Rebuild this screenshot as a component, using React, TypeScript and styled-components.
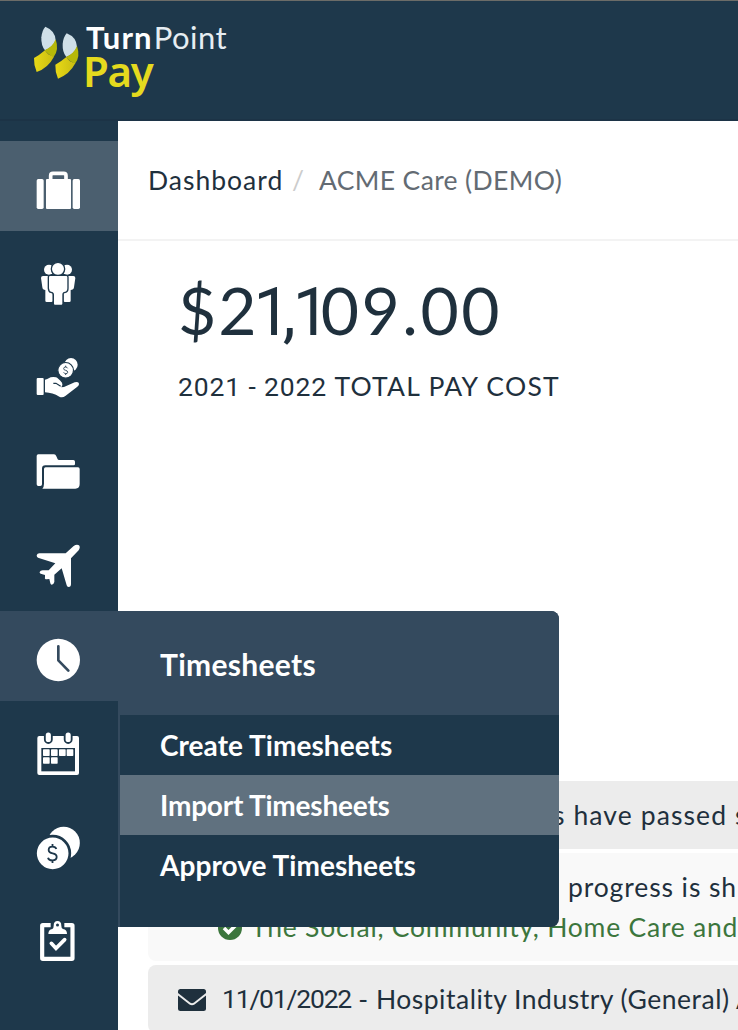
import React from "react";
import styled, { createGlobalStyle } from "styled-components";

const navy = "#1e384b";
const slate = "#344a5e";
const ink = "#1f303d";

const GlobalStyle = createGlobalStyle`
  * { box-sizing: border-box; }
  body { margin: 0; background: #fff; overflow: hidden; font-family: Lato, "Open Sans", sans-serif; color: ${ink}; }
`;

const Page = styled.div`
  display: flex;
  flex-direction: column;
  height: 1030px;
  width: 738px;
  overflow: hidden;
`;

const Header = styled.header`
  display: flex;
  flex: none;
  height: 121px;
  padding: 23px 0 0 33px;
  background: ${navy};
  border-top: 1px solid #6c6c68;
  border-bottom: 2px solid #1c3346;
`;

const LogoMark = styled.svg`
  width: 48px;
  height: 56px;
  flex: none;
`;

const LogoText = styled.div`
  display: flex;
  flex-direction: column;
  margin: -2px 0 0 4px;
  color: #fff;
  white-space: nowrap;
`;

const LogoName = styled.div`
  font-size: 31px;
  line-height: 30px;
  font-weight: 700;
  height: 30px;
  padding-left: 1px;
  letter-spacing: 1.1px;
`;

const LogoLight = styled.span`
  font-weight: 400;
  color: #e6edf2;
  margin-left: 1px;
  letter-spacing: 0.5px;
`;

const LogoPay = styled.div`
  font-family: "Noto Sans", "Open Sans", sans-serif;
  font-size: 42px;
  line-height: 38px;
  font-weight: 600;
  color: #e5da1e;
  margin-left: -2px;
  letter-spacing: -1.3px;
`;

const Body = styled.div`
  display: flex;
  flex: 1;
  min-height: 0;
`;

const Sidebar = styled.nav`
  position: relative;
  display: flex;
  flex-direction: column;
  gap: 4px;
  flex: none;
  width: 118px;
  padding-top: 20px;
  background: ${navy};
`;

const NavItem = styled.a<{ $bg?: string }>`
  display: flex;
  justify-content: center;
  flex: none;
  height: 90px;
  padding-top: 25px;
  padding-right: 2px;
  background: ${(p) => p.$bg ?? "transparent"};
`;

const NavIcon = styled.svg`
  width: 48px;
  height: 48px;
  fill: #fff;
`;

const Flyout = styled.div`
  position: absolute;
  z-index: 2;
  left: 118px;
  top: 490px;
  width: 441px;
  height: 316px;
  border-left: 2px solid ${slate};
  border-radius: 0 8px 8px 0;
  overflow: hidden;
  background: ${navy};
  color: #fff;
  font-weight: 700;
  white-space: nowrap;
`;

const FlyoutTitle = styled.div`
  height: 104px;
  padding: 3px 0 0 40px;
  line-height: 101px;
  font-size: 30px;
  letter-spacing: 0.3px;
  background: ${slate};
`;

const FlyoutItem = styled.a<{ $active?: boolean; $ls?: number }>`
  display: block;
  height: 60px;
  padding-left: 40px;
  line-height: 60px;
  font-size: 28px;
  letter-spacing: ${(p) => p.$ls ?? 0.05}px;
  background: ${(p) => (p.$active ? "#60717f" : "transparent")};
`;

const Main = styled.main`
  display: flex;
  flex-direction: column;
  flex: 1;
  min-width: 0;
  white-space: nowrap;
`;

const Breadcrumb = styled.div`
  display: flex;
  flex: none;
  height: 120px;
  padding-left: 30px;
  line-height: 118px;
  font-size: 26.5px;
  border-bottom: 2px solid #f3f3f3;
`;

const Crumb = styled.span<{ $color: string; $width?: number; $ls?: number }>`
  flex: none;
  width: ${(p) => (p.$width ? `${p.$width}px` : "auto")};
  color: ${(p) => p.$color};
  letter-spacing: ${(p) => p.$ls ?? 0}px;
`;

const Digits = styled.span<{ $ls: number }>`
  font-family: Roboto, sans-serif;
  letter-spacing: ${(p) => p.$ls}px;
  white-space: pre;
`;

const Round = styled.span<{ $ls: number }>`
  letter-spacing: ${(p) => p.$ls}px;
`;

const Summary = styled.section`
  flex: none;
  height: 540px;
  padding: 32px 0 0 60px;
`;

const Amount = styled.div`
  height: 76px;
  font-size: 66px;
  line-height: 73px;
`;

const AmountLabel = styled.div`
  margin-top: 17px;
  font-size: 26.5px;
  line-height: 40px;
  letter-spacing: 1.25px;
`;

const Alerts = styled.section`
  display: flex;
  flex-direction: column;
  gap: 4px;
  padding-left: 30px;
`;

const Alert = styled.div<{ $light?: boolean; $height: number }>`
  flex: none;
  height: ${(p) => p.$height}px;
  padding: 14px 0 0 30px;
  border-radius: 8px 0 0 8px;
  background: ${(p) => (p.$light ? "#f9f9f9" : "#ececec")};
  overflow: hidden;
`;

const Line = styled.div<{ $indent?: number; $color?: string; $ls?: number }>`
  display: flex;
  align-items: center;
  height: 40px;
  padding-left: ${(p) => p.$indent ?? 0}px;
  font-size: 26.5px;
  line-height: 40px;
  color: ${(p) => p.$color ?? ink};
  letter-spacing: ${(p) => p.$ls ?? 0}px;
  white-space: pre;
`;

const MailIcon = styled.svg`
  width: 28px;
  height: 22px;
  margin: 2px 16px 0 0;
  flex: none;
`;

const CheckIcon = styled.svg`
  width: 24px;
  height: 24px;
  margin: 1px 9px 0 0;
  flex: none;
`;

const icons: { name: string; viewBox: string; bg?: string; art: React.ReactNode }[] = [
  {
    name: "suitcase",
    viewBox: "102 108 144 144",
    bg: "#4b5f6f",
    art: (
      <>
        <rect x="110" y="147" width="21" height="90" rx="5" />
        <rect x="138" y="147" width="75" height="90" rx="3" />
        <rect x="218" y="147" width="22" height="90" rx="5" />
        <path d="M152 149V137q0-7 7-7H191q7 0 7 7V149" fill="none" stroke="#fff" strokeWidth="11" />
      </>
    ),
  },
  {
    name: "people",
    viewBox: "102 390 144 144",
    art: (
      <>
        <circle cx="147" cy="419" r="15" />
        <circle cx="201" cy="419" r="15" />
        <path d="M129 438H145V476L158 489V512q0 4-4 4H140q-4 0-4-4V480q-8 0-9-8L123 444q0-6 6-6z" />
        <path d="M220 438H204V476L191 489V512q0 4 4 4H208q4 0 4-4V480q9 0 10-8L226 444q0-6-6-6z" />
        <circle cx="174" cy="417" r="20" stroke={navy} strokeWidth="4" />
        <path
          d="M150 436H199q5 0 5 6V475q0 11-8 12t-7 8V521q0 5-5 5H165q-5 0-5-5V494q0-6-7-7t-8-12V442q0-6 5-6z"
          stroke={navy}
          strokeWidth="4"
        />
      </>
    ),
  },
  {
    name: "hand with coins",
    viewBox: "102 72 144 144",
    art: (
      <>
        <rect x="110" y="144" width="21" height="51" rx="3" />
        <path d="M135 149Q140 149 152 142Q160 140 168 142Q174 144 186 158Q190 166 184 172L192 171L224 157Q236 153 237 161Q238 166 232 170L196 198Q187 205 178 200Q158 188 135 187z" />
        <path d="M160 160L168 160L182 169" fill="none" stroke={navy} strokeWidth="3.5" />
        <circle cx="213" cy="104" r="20" />
        <circle cx="197" cy="121" r="23.5" stroke={navy} strokeWidth="3.5" />
        <path d="M203 115q-2-4-6-4q-6 0-6 5q0 4 6 5q6 1 6 6q0 4-6 4q-4 0-6-4M197 107V111M197 131V135" fill="none" stroke={navy} strokeWidth="2.6" />
      </>
    ),
  },
  {
    name: "folder",
    viewBox: "102 354 144 144",
    art: (
      <>
        <path d="M110 378q0-5 5-5H162q5 0 7 6l4 9q1 2 4 2H220q5 0 5 5V402q0 4-4 4H136q-10 0-10 10V463q0 5-5 5H115q-5 0-5-5z" />
        <path d="M137 412H234q5 0 5 5V462q0 14-13 14H127q5-5 5-15V417q0-5 5-5z" />
      </>
    ),
  },
  {
    name: "plane",
    viewBox: "102 96 144 144",
    art: (
      <path d="M237 106Q242 112 236 121L213 145V222Q213 231 206 231Q201 231 200 226L185 175L163 194V216Q161 224 155 224Q152 224 151 220L148 207Q143 207 140 208Q133 208 135 202L135 195L122 191Q118 190 119 186Q121 181 128 181H146L166 160L114 143Q110 141 110 136Q112 130 118 130H197L221 108Q230 102 237 106z" />
    ),
  },
  {
    name: "clock",
    viewBox: "102 378 144 144",
    bg: slate,
    art: (
      <>
        <ellipse cx="175" cy="450" rx="65" ry="63.5" />
        <path d="M175 409V451L205 482" fill="none" stroke={slate} strokeWidth="8" strokeLinecap="round" strokeLinejoin="round" />
      </>
    ),
  },
  {
    name: "calendar",
    viewBox: "102 90 144 144",
    art: (
      <>
        <rect x="112" y="108" width="125" height="117" rx="6" />
        <rect x="124" y="144" width="101" height="70" fill={navy} />
        {[145, 204.5].map((x) => (
          <rect key={x} x={x - 10.5} y="95" width="21" height="34" rx="10.5" stroke={navy} strokeWidth="5.5" />
        ))}
        {[129, 153, 177, 200].map((x) => (
          <rect key={x} x={x} y="148" width="20" height="20" rx="2" />
        ))}
        {[129, 153].map((x) => (
          <rect key={x} x={x} y="172" width="20" height="19" rx="2" />
        ))}
      </>
    ),
  },
  {
    name: "coins",
    viewBox: "102 372 144 144",
    art: (
      <>
        <circle cx="191" cy="429" r="48.5" />
        <circle cx="158" cy="460" r="51.5" stroke={navy} strokeWidth="8" />
        <path d="M169 447q-2-7-12-7q-11 0-11 10q0 8 12 10q12 2 12 11q0 10-13 10q-11 0-13-8M157.500 432V440M157.500 481V489" fill="none" stroke={navy} strokeWidth="5.5" />
      </>
    ),
  },
  {
    name: "clipboard",
    viewBox: "102 114 144 144",
    art: (
      <>
        <rect x="126.500" y="135.500" width="91" height="101" rx="2" fill="none" stroke="#fff" strokeWidth="12.500" />
        <rect x="152" y="126" width="41" height="18" fill={navy} />
        <path d="M145 162Q145 149 157 147Q161 146 161 137Q161 123 172.500 123Q184 123 184 137Q184 146 189 147Q201 149 201 162z" />
        <circle cx="172.500" cy="135" r="4.500" fill={navy} />
        <path d="M154 190L168 205L194 179" fill="none" stroke="#fff" strokeWidth="11" strokeLinecap="round" />
      </>
    ),
  },
];

export default function App() {
  return (
    <Page>
      <GlobalStyle />
      <Header>
        <LogoMark viewBox="99 72 144 168">
          <defs>
            <linearGradient id="leaf" x1="0" y1="0" x2="1" y2="0">
              <stop offset="0" stopColor="#e8d916" />
              <stop offset="1" stopColor="#c9bd12" />
            </linearGradient>
          </defs>
          {[[0, 0], [64, 20]].map(([x, y]) => (
            <g key={x} transform={`translate(${x} ${y})`}>
              <path d="M136 80Q166 92 167 121Q158 143 135 151Q123 137 124 112Q126 91 136 80z" fill="#cfdfe7" />
              <path d="M167 118Q178 150 161 171Q143 164 134 151Q158 141 167 118z" fill="#b6b808" />
              <path d="M102 174Q119 165 135 151Q142 165 162 170Q145 203 110 216Q101 195 102 174z" fill="url(#leaf)" />
            </g>
          ))}
        </LogoMark>
        <LogoText>
          <LogoName>
            Turn<LogoLight>Point</LogoLight>
          </LogoName>
          <LogoPay>Pay</LogoPay>
        </LogoText>
      </Header>
      <Body>
        <Sidebar>
          {icons.map((icon) => (
            <NavItem key={icon.name} $bg={icon.bg}>
              <NavIcon viewBox={icon.viewBox} aria-label={icon.name}>
                {icon.art}
              </NavIcon>
            </NavItem>
          ))}
          <Flyout>
            <FlyoutTitle>Timesheets</FlyoutTitle>
            <FlyoutItem>Create Timesheets</FlyoutItem>
            <FlyoutItem $active $ls={-0.2}>Import Timesheets</FlyoutItem>
            <FlyoutItem>Approve Timesheets</FlyoutItem>
          </Flyout>
        </Sidebar>
        <Main>
          <Breadcrumb>
            <Crumb $color={ink} $width={144} $ls={1}>Dashboard</Crumb>
            <Crumb $color="#cccccc" $width={27}>/</Crumb>
            <Crumb $color="#636b73" $ls={0.35}>ACME Care (DEMO)</Crumb>
          </Breadcrumb>
          <Summary>
            <Amount>
              <Round $ls={2}>$</Round>
              <Round $ls={-3}>2</Round>
              <Digits $ls={-8}>1</Digits>
              <Digits $ls={-3}>,</Digits>
              <Digits $ls={-9}>1</Digits>
              <Round $ls={2.5}>09.00</Round>
            </Amount>
            <AmountLabel>
              <Digits $ls={0.85}>2021 - 2022 </Digits>TOTAL PAY COST
            </AmountLabel>
          </Summary>
          <Alerts>
            <Alert $height={68}>
              <Line $indent={375} $ls={1.1}>s have passed s</Line>
            </Alert>
            <Alert $light $height={108}>
              <Line $indent={390} $ls={0.9}>progress is sh</Line>
              <Line $indent={40} $color="#3c763d" $ls={0.77}>
                <CheckIcon viewBox="0 0 24 24">
                  <circle cx="12" cy="12" r="12" fill="#3c763d" />
                  <path d="M6 12l4.500 4.500L18 9" fill="none" stroke="#fff" strokeWidth="3.500" />
                </CheckIcon>
                The Social, Community, Home Care and
              </Line>
            </Alert>
            <Alert $height={68}>
              <Line $ls={0.5}>
                <MailIcon viewBox="0 0 28 22" fill={ink}>
                  <path d="M2.500 0H25.500Q28 0 28 2.500V4L16 13.500Q14 15 12 13.500L0 4V2.500Q0 0 2.500 0z" />
                  <path d="M0 6.500L11.500 15.500Q14 17 16.500 15.500L28 6.500V19.500Q28 22 25.500 22H2.500Q0 22 0 19.500z" />
                </MailIcon>
                <Digits $ls={-1.2}>11/01/2022</Digits> - Hospitality Industry (General) A
              </Line>
            </Alert>
          </Alerts>
        </Main>
      </Body>
    </Page>
  );
}
